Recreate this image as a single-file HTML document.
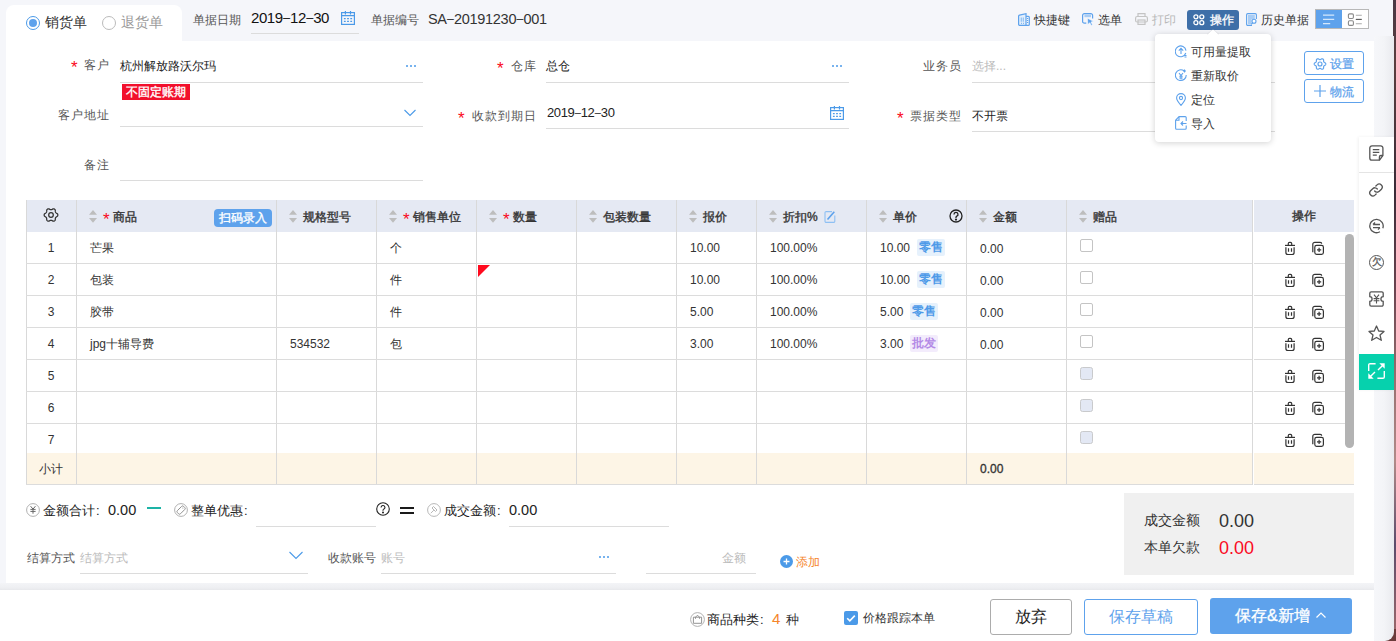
<!DOCTYPE html>
<html><head><meta charset="utf-8">
<style>
*{box-sizing:border-box;margin:0;padding:0}
html,body{width:1396px;height:641px;overflow:hidden}
body{position:relative;background:#f5f6fa;font-family:"Liberation Sans",sans-serif;font-size:12px;color:#333}
.a{position:absolute}
.t{position:absolute;white-space:nowrap;line-height:16px;height:16px}
.ul{position:absolute;height:1px;background:#dcdcdc}
.req{color:#fa0a23}
.lbl{color:#555;letter-spacing:1px}
.dots{position:absolute;width:10px;height:3px}
.dots i{position:absolute;top:0;width:2px;height:2px;background:#4b9ae8;border-radius:1px}
.nd{font-size:0.85em;margin:0 0.03em;position:relative;top:-0.05em}
.btnb{position:absolute;border:1px solid #5ea2ec;border-radius:3px;color:#5ea2ec;background:#fff}
</style></head><body>

<!-- desktop strip at right -->
<div class="a" style="left:1393px;top:0;width:3px;height:641px;background:linear-gradient(#4a3844,#5a3e3e 10%,#3a2c38 30%,#6a4450 45%,#9a7272 60%,#b08a88 72%,#5c4c6c 85%,#a06a6a)"></div>
<div class="a" style="left:1382px;top:629px;width:14px;height:12px;background:#6a3a3a"></div>
<div class="a" style="left:1374px;top:36px;width:20px;height:605px;background:linear-gradient(90deg,#f6f7fa,#f3f4f7 50%,#e9eaee);border-bottom-right-radius:9px"></div>


<!-- right toolbar -->
<svg class="a" style="left:1018px;top:13px" width="12" height="13" viewBox="0 0 12 13" fill="none" stroke="#5ea2ec" stroke-width="1.2"><path d="M.6 3.4A1.2 1.2 0 0 1 1.5 2.2L8 .7v11.7H1.8A1.2 1.2 0 0 1 .6 11.2z" fill="#e3effc"/><path d="M8 3.3h2.3a1 1 0 0 1 1 1v7.1a1 1 0 0 1-1 1H8"/><path d="M3.3 4.5v4.2M5.3 4.5v4.2" stroke="#8ec0f3"/><path d="M3 10.3h.9M5 10.3h.9M9 5.5h1.2M9 7.5h1.2M9 9.5h1.2" stroke-width="1"/></svg>
<div class="t" style="left:1034px;top:12px;color:#333">快捷键</div>
<svg class="a" style="left:1082px;top:13px" width="12" height="13" viewBox="0 0 12 13" fill="none" stroke="#5ea2ec" stroke-width="1.2"><path d="M4.3 10.2H2.4A1.8 1.8 0 0 1 .6 8.4V2.4A1.8 1.8 0 0 1 2.4.6h6.4a1.8 1.8 0 0 1 1.8 1.8v3.2"/><rect x="2.4" y="1.4" width="6.6" height="2.8" fill="#a9cdf5" stroke="none"/><path d="M5.4 5.2l6.2 3.1-2.6.8 1.5 2.6-1.2.7-1.5-2.6-2 1.8z" fill="#5ea2ec" stroke="#fff" stroke-width=".6"/></svg>
<div class="t" style="left:1098px;top:12px;color:#333">选单</div>
<svg class="a" style="left:1135px;top:13px" width="13" height="12" viewBox="0 0 13 12" fill="none" stroke="#c4c4c4" stroke-width="1.2"><path d="M3 3.5V.6h7v2.9"/><rect x=".6" y="3.5" width="11.8" height="5.5" rx="1.5"/><rect x="3" y="7" width="7" height="4.4"/></svg>
<div class="t" style="left:1152px;top:12px;color:#b8b8b8">打印</div>
<div class="a" style="left:1187px;top:10px;width:52px;height:20px;background:#3e6fa8;border-radius:3px"></div>

<svg class="a" style="left:1193px;top:14px" width="12" height="12" viewBox="0 0 12 12" fill="none" stroke="#fff" stroke-width="1.3"><circle cx="2.9" cy="2.8" r="2"/><circle cx="8.8" cy="2.8" r="2"/><circle cx="2.9" cy="8.7" r="2"/><circle cx="8.8" cy="8.7" r="2"/></svg>
<div class="t" style="left:1210px;top:12px;color:#fff;-webkit-text-stroke:0.3px #fff">操作</div>
<svg class="a" style="left:1246px;top:13px" width="11" height="13" viewBox="0 0 11 13" fill="none" stroke="#5ea2ec" stroke-width="1.1"><path d="M6 12.4H1.8A1.2 1.2 0 0 1 .6 11.2V1.8A1.2 1.2 0 0 1 1.8.6h7.4a1.2 1.2 0 0 1 1.2 1.2V6"/><path d="M2 2h6.8v4.2H5.5v5H2z" fill="#a9cdf5" stroke="none"/><circle cx="8" cy="8.3" r="2" fill="#fff"/><path d="M6.6 9.8l-1.4 1.6"/></svg>
<div class="t" style="left:1261px;top:12px;color:#333">历史单据</div>
<div class="a" style="left:1315px;top:9px;width:54px;height:20px;border:1px solid #b8b8b8;background:#fff"></div>
<div class="a" style="left:1316px;top:10px;width:26px;height:18px;background:#5ea2ec"></div>
<svg class="a" style="left:1322px;top:13px" width="14" height="12" viewBox="0 0 14 12" stroke="#d4e7fb" stroke-width="1.2"><path d="M1 2.2h11.2M1 6.4h11.2M1 10.7h7.2"/></svg>
<svg class="a" style="left:1347px;top:13px" width="16" height="13" viewBox="0 0 16 13" fill="none" stroke="#8a8a8a" stroke-width="1.1"><rect x="1.4" y=".9" width="5" height="4.6" rx="1.2"/><rect x="1.4" y="7.8" width="5" height="4.6" rx="1.2"/><path d="M8.8 2.2h6M8.8 10.7h6" stroke="#aaa"/><path d="M8.8 6.4h6" stroke="#555"/></svg>

<!-- main white panel -->
<div class="a" style="left:6px;top:41px;width:1368px;height:542px;background:#fff"></div>

<!-- FORM -->
<div class="t req" style="left:71px;top:60px;font-size:17px;line-height:16px">*</div>
<div class="t lbl" style="left:84px;top:57px">客户</div>
<div class="t" style="left:120px;top:58px;color:#222">杭州解放路沃尔玛</div>
<div class="dots" style="left:406px;top:65px"><i style="left:0"></i><i style="left:4px"></i><i style="left:8px"></i></div>
<div class="ul" style="left:120px;top:82px;width:303px"></div>
<div class="a" style="left:122px;top:84px;width:68px;height:16px;background:#f2102c;color:#fff;font-size:12px;line-height:16px;text-align:center;-webkit-text-stroke:0.35px #fff">不固定账期</div>

<div class="t req" style="left:497px;top:61px;font-size:17px;line-height:16px">*</div>
<div class="t lbl" style="left:511px;top:58px">仓库</div>
<div class="t" style="left:546px;top:58px;color:#222">总仓</div>
<div class="dots" style="left:832px;top:65px"><i style="left:0"></i><i style="left:4px"></i><i style="left:8px"></i></div>
<div class="ul" style="left:546px;top:82px;width:303px"></div>

<div class="t lbl" style="left:923px;top:58px">业务员</div>
<div class="t" style="left:972px;top:58px;color:#bbb">选择...</div>
<div class="ul" style="left:972px;top:82px;width:303px"></div>

<div class="btnb" style="left:1304px;top:51px;width:60px;height:24px"></div>
<svg class="a" style="left:1312.6px;top:56.5px" width="14" height="14" viewBox="0 0 14 14" fill="none" stroke="#5ea2ec" stroke-width="1.15"><path d="M12.80 7.00 L12.75 7.38 L12.60 7.74 L12.35 8.06 L11.93 8.32 L11.49 8.52 L11.20 8.74 L10.98 8.96 L10.81 9.20 L10.69 9.47 L10.61 9.77 L10.57 10.13 L10.61 10.61 L10.60 11.10 L10.44 11.48 L10.20 11.79 L9.90 12.02 L9.55 12.17 L9.16 12.22 L8.75 12.17 L8.32 11.93 L7.93 11.65 L7.59 11.51 L7.29 11.43 L7.00 11.40 L6.71 11.43 L6.41 11.51 L6.07 11.65 L5.68 11.93 L5.25 12.17 L4.84 12.22 L4.45 12.17 L4.10 12.02 L3.80 11.79 L3.56 11.48 L3.40 11.10 L3.39 10.61 L3.43 10.13 L3.39 9.77 L3.31 9.47 L3.19 9.20 L3.02 8.96 L2.80 8.74 L2.51 8.52 L2.07 8.32 L1.65 8.06 L1.40 7.74 L1.25 7.38 L1.20 7.00 L1.25 6.62 L1.40 6.26 L1.65 5.94 L2.07 5.68 L2.51 5.48 L2.80 5.26 L3.02 5.04 L3.19 4.80 L3.31 4.53 L3.39 4.23 L3.43 3.87 L3.39 3.39 L3.40 2.90 L3.56 2.52 L3.80 2.21 L4.10 1.98 L4.45 1.83 L4.84 1.78 L5.25 1.83 L5.68 2.07 L6.07 2.35 L6.41 2.49 L6.71 2.57 L7.00 2.60 L7.29 2.57 L7.59 2.49 L7.93 2.35 L8.32 2.07 L8.75 1.83 L9.16 1.78 L9.55 1.83 L9.90 1.98 L10.20 2.21 L10.44 2.52 L10.60 2.90 L10.61 3.39 L10.57 3.87 L10.61 4.23 L10.69 4.53 L10.81 4.80 L10.98 5.04 L11.20 5.26 L11.49 5.48 L11.93 5.68 L12.35 5.94 L12.60 6.26 L12.75 6.62Z"/><circle cx="7" cy="7" r="2"/></svg>
<div class="t" style="left:1330px;top:56px;color:#5ea2ec;font-size:12px;line-height:17px;height:17px;-webkit-text-stroke:0.25px #5ea2ec">设置</div>
<div class="btnb" style="left:1304px;top:79px;width:60px;height:24px"></div>
<svg class="a" style="left:1314px;top:85px" width="12" height="12" viewBox="0 0 12 12" stroke="#5ea2ec" stroke-width="1.2"><path d="M6 0v12M0 6h12"/></svg>
<div class="t" style="left:1330px;top:84px;color:#5ea2ec;font-size:12px;line-height:17px;height:17px;-webkit-text-stroke:0.25px #5ea2ec">物流</div>

<div class="t lbl" style="left:58px;top:107px">客户地址</div>
<svg class="a" style="left:404px;top:109px" width="12" height="8" viewBox="0 0 12 8" fill="none" stroke="#4b9ae8" stroke-width="1.1"><path d="M.5 1l5.5 5.5L11.5 1"/></svg>
<div class="ul" style="left:120px;top:126px;width:303px"></div>

<div class="t req" style="left:458px;top:111px;font-size:17px;line-height:16px">*</div>
<div class="t lbl" style="left:472px;top:108px">收款到期日</div>
<div class="t" style="left:547px;top:105px;font-size:13px;letter-spacing:-0.4px;color:#222">2019<span class="nd">–</span>12<span class="nd">–</span>30</div>
<svg class="a" style="left:830px;top:106px" width="14" height="14" viewBox="0 0 14 14" fill="none" stroke="#4b9ae8" stroke-width="1.2"><rect x="0.6" y="1.6" width="12.8" height="11.8"/><path d="M4.4 0v3.4M9.5 0v3.4M0.6 4.6h12.8"/><path d="M2.9 7.6h1.8M6.1 7.6h1.8M9.3 7.6h1.8M2.9 10.4h1.8M6.1 10.4h1.8M9.3 10.4h1.8" stroke-width="1.1"/></svg>
<div class="ul" style="left:546px;top:128px;width:303px"></div>

<div class="t req" style="left:897px;top:111px;font-size:17px;line-height:16px">*</div>
<div class="t lbl" style="left:910px;top:108px">票据类型</div>
<div class="t" style="left:972px;top:108px;color:#222">不开票</div>
<div class="ul" style="left:972px;top:131px;width:303px"></div>

<div class="t lbl" style="left:84px;top:157px">备注</div>
<div class="ul" style="left:120px;top:180px;width:303px"></div>

<!-- TABLE -->
<div class="a" style="left:26px;top:200px;width:1226px;height:32px;background:#e5e9f3"></div>
<div class="a" style="left:1254px;top:200px;width:100px;height:32px;background:#e5e9f3"></div>
<div class="a" style="left:26px;top:453px;width:1226px;height:31px;background:#fdf5e6"></div>
<div class="a" style="left:1254px;top:453px;width:100px;height:31px;background:#fdf5e6"></div>
<div class="a" style="left:26px;top:200px;width:1px;height:285px;background:#d9d9d9"></div>
<div class="a" style="left:76px;top:200px;width:1px;height:285px;background:#d9d9d9"></div>
<div class="a" style="left:276px;top:200px;width:1px;height:285px;background:#d9d9d9"></div>
<div class="a" style="left:376px;top:200px;width:1px;height:285px;background:#d9d9d9"></div>
<div class="a" style="left:476px;top:200px;width:1px;height:285px;background:#d9d9d9"></div>
<div class="a" style="left:576px;top:200px;width:1px;height:285px;background:#d9d9d9"></div>
<div class="a" style="left:676px;top:200px;width:1px;height:285px;background:#d9d9d9"></div>
<div class="a" style="left:756px;top:200px;width:1px;height:285px;background:#d9d9d9"></div>
<div class="a" style="left:866px;top:200px;width:1px;height:285px;background:#d9d9d9"></div>
<div class="a" style="left:966px;top:200px;width:1px;height:285px;background:#d9d9d9"></div>
<div class="a" style="left:1066px;top:200px;width:1px;height:285px;background:#d9d9d9"></div>
<div class="a" style="left:1252px;top:200px;width:1px;height:285px;background:#d9d9d9"></div>
<div class="a" style="left:26px;top:263px;width:1226px;height:1px;background:#dcdcdc"></div>
<div class="a" style="left:1254px;top:263px;width:100px;height:1px;background:#dcdcdc"></div>
<div class="a" style="left:26px;top:295px;width:1226px;height:1px;background:#dcdcdc"></div>
<div class="a" style="left:1254px;top:295px;width:100px;height:1px;background:#dcdcdc"></div>
<div class="a" style="left:26px;top:327px;width:1226px;height:1px;background:#dcdcdc"></div>
<div class="a" style="left:1254px;top:327px;width:100px;height:1px;background:#dcdcdc"></div>
<div class="a" style="left:26px;top:359px;width:1226px;height:1px;background:#dcdcdc"></div>
<div class="a" style="left:1254px;top:359px;width:100px;height:1px;background:#dcdcdc"></div>
<div class="a" style="left:26px;top:391px;width:1226px;height:1px;background:#dcdcdc"></div>
<div class="a" style="left:1254px;top:391px;width:100px;height:1px;background:#dcdcdc"></div>
<div class="a" style="left:26px;top:423px;width:1226px;height:1px;background:#dcdcdc"></div>
<div class="a" style="left:1254px;top:423px;width:100px;height:1px;background:#dcdcdc"></div>
<div class="a" style="left:26px;top:484px;width:1226px;height:1px;background:#dcdcdc"></div>
<div class="a" style="left:1254px;top:484px;width:100px;height:1px;background:#dcdcdc"></div>
<svg class="a" style="left:43.4px;top:207.4px" width="16" height="16" viewBox="0 0 16 16" fill="none" stroke="#333" stroke-width="1.25"><path d="M14.85 8.00 L14.79 8.45 L14.63 8.87 L14.36 9.26 L13.89 9.58 L13.41 9.84 L13.09 10.11 L12.83 10.38 L12.63 10.67 L12.48 10.99 L12.37 11.36 L12.30 11.77 L12.31 12.31 L12.27 12.87 L12.07 13.31 L11.78 13.66 L11.43 13.93 L11.01 14.11 L10.56 14.18 L10.08 14.14 L9.58 13.89 L9.12 13.61 L8.72 13.46 L8.35 13.38 L8.00 13.35 L7.65 13.38 L7.28 13.46 L6.88 13.61 L6.42 13.89 L5.92 14.14 L5.44 14.18 L4.99 14.11 L4.58 13.93 L4.22 13.66 L3.93 13.31 L3.73 12.87 L3.69 12.31 L3.70 11.77 L3.63 11.36 L3.52 10.99 L3.37 10.67 L3.17 10.38 L2.91 10.11 L2.59 9.84 L2.11 9.58 L1.64 9.26 L1.37 8.87 L1.21 8.45 L1.15 8.00 L1.21 7.55 L1.37 7.13 L1.64 6.74 L2.11 6.42 L2.59 6.16 L2.91 5.89 L3.17 5.62 L3.37 5.33 L3.52 5.01 L3.63 4.64 L3.70 4.23 L3.69 3.69 L3.73 3.13 L3.93 2.69 L4.22 2.34 L4.57 2.07 L4.99 1.89 L5.44 1.82 L5.92 1.86 L6.42 2.11 L6.88 2.39 L7.28 2.54 L7.65 2.62 L8.00 2.65 L8.35 2.62 L8.72 2.54 L9.12 2.39 L9.58 2.11 L10.08 1.86 L10.56 1.82 L11.01 1.89 L11.43 2.07 L11.78 2.34 L12.07 2.69 L12.27 3.13 L12.31 3.69 L12.30 4.23 L12.37 4.64 L12.48 5.01 L12.63 5.32 L12.83 5.62 L13.09 5.89 L13.41 6.16 L13.89 6.42 L14.36 6.74 L14.63 7.13 L14.79 7.55Z"/><circle cx="8" cy="8" r="2.3"/></svg>
<svg class="a" style="left:89px;top:210px" width="8" height="13" viewBox="0 0 8 13" fill="#bdbdbd"><path d="M4 0L8 4.8H0z"/><path d="M0 8h8L4 12.8z"/></svg>
<div class="t req" style="left:103px;top:212px;font-size:17px;line-height:16px">*</div>
<div class="t" style="left:113px;top:209px;color:#333;-webkit-text-stroke:0.35px #333">商品</div>
<svg class="a" style="left:289px;top:210px" width="8" height="13" viewBox="0 0 8 13" fill="#bdbdbd"><path d="M4 0L8 4.8H0z"/><path d="M0 8h8L4 12.8z"/></svg>
<div class="t" style="left:303px;top:209px;color:#333;-webkit-text-stroke:0.35px #333">规格型号</div>
<svg class="a" style="left:389px;top:210px" width="8" height="13" viewBox="0 0 8 13" fill="#bdbdbd"><path d="M4 0L8 4.8H0z"/><path d="M0 8h8L4 12.8z"/></svg>
<div class="t req" style="left:403px;top:212px;font-size:17px;line-height:16px">*</div>
<div class="t" style="left:413px;top:209px;color:#333;-webkit-text-stroke:0.35px #333">销售单位</div>
<svg class="a" style="left:489px;top:210px" width="8" height="13" viewBox="0 0 8 13" fill="#bdbdbd"><path d="M4 0L8 4.8H0z"/><path d="M0 8h8L4 12.8z"/></svg>
<div class="t req" style="left:503px;top:212px;font-size:17px;line-height:16px">*</div>
<div class="t" style="left:513px;top:209px;color:#333;-webkit-text-stroke:0.35px #333">数量</div>
<svg class="a" style="left:589px;top:210px" width="8" height="13" viewBox="0 0 8 13" fill="#bdbdbd"><path d="M4 0L8 4.8H0z"/><path d="M0 8h8L4 12.8z"/></svg>
<div class="t" style="left:603px;top:209px;color:#333;-webkit-text-stroke:0.35px #333">包装数量</div>
<svg class="a" style="left:689px;top:210px" width="8" height="13" viewBox="0 0 8 13" fill="#bdbdbd"><path d="M4 0L8 4.8H0z"/><path d="M0 8h8L4 12.8z"/></svg>
<div class="t" style="left:703px;top:209px;color:#333;-webkit-text-stroke:0.35px #333">报价</div>
<svg class="a" style="left:769px;top:210px" width="8" height="13" viewBox="0 0 8 13" fill="#bdbdbd"><path d="M4 0L8 4.8H0z"/><path d="M0 8h8L4 12.8z"/></svg>
<div class="t" style="left:783px;top:209px;color:#333;-webkit-text-stroke:0.35px #333">折扣%</div>
<svg class="a" style="left:879px;top:210px" width="8" height="13" viewBox="0 0 8 13" fill="#bdbdbd"><path d="M4 0L8 4.8H0z"/><path d="M0 8h8L4 12.8z"/></svg>
<div class="t" style="left:893px;top:209px;color:#333;-webkit-text-stroke:0.35px #333">单价</div>
<svg class="a" style="left:979px;top:210px" width="8" height="13" viewBox="0 0 8 13" fill="#bdbdbd"><path d="M4 0L8 4.8H0z"/><path d="M0 8h8L4 12.8z"/></svg>
<div class="t" style="left:993px;top:209px;color:#333;-webkit-text-stroke:0.35px #333">金额</div>
<svg class="a" style="left:1079px;top:210px" width="8" height="13" viewBox="0 0 8 13" fill="#bdbdbd"><path d="M4 0L8 4.8H0z"/><path d="M0 8h8L4 12.8z"/></svg>
<div class="t" style="left:1093px;top:209px;color:#333;-webkit-text-stroke:0.35px #333">赠品</div>
<div class="a" style="left:214px;top:209px;width:58px;height:18px;background:#5ea2ec;border-radius:4px;color:#fff;-webkit-text-stroke:0.35px #fff;text-align:center;line-height:18px">扫码录入</div>
<svg class="a" style="left:824px;top:210px" width="12" height="13" viewBox="0 0 12 13" fill="none" stroke="#5ea2ec" stroke-width="1.1"><path d="M8 1.6H2.2A1.2 1.2 0 0 0 1 2.8v8.4a1.2 1.2 0 0 0 1.2 1.2h7.4a1.2 1.2 0 0 0 1.2-1.2V5.5" stroke="#8ec0f3"/><path d="M3.5 9.5l6.8-7.8" stroke-width="1.6"/></svg>
<svg class="a" style="left:949px;top:209px" width="14" height="14" viewBox="0 0 14 14" fill="none" stroke="#222" stroke-width="1.3"><circle cx="7" cy="7" r="6"/><path d="M5 5.4a2 2 0 1 1 2.8 1.8c-.6.3-.8.7-.8 1.3v.6"/><circle cx="7" cy="10.6" r=".5" fill="#222"/></svg>
<div class="t" style="left:1292px;top:208px;color:#333;-webkit-text-stroke:0.35px #333">操作</div>
<div class="a" style="left:26px;top:232px;width:50px;height:31px;line-height:33px;text-align:center;color:#333">1</div>
<div class="t" style="left:90px;top:239.5px;color:#333">芒果</div>
<div class="t" style="left:390px;top:239.5px;color:#333">个</div>
<div class="t" style="left:690px;top:239.5px;color:#333">10.00</div>
<div class="t" style="left:770px;top:239.5px;color:#333">100.00%</div>
<div class="t" style="left:880px;top:239.5px;color:#333">10.00<span style="display:inline-block;margin-left:6.5px;padding:0 2px;height:17px;line-height:17px;vertical-align:top;margin-top:-0.5px;background:#e6f1fc;color:#4e9ae8;font-weight:600;border-radius:2px">零售</span></div>
<div class="t" style="left:980px;top:240.5px;color:#333">0.00</div>
<div class="a" style="left:1080px;top:239px;width:13px;height:13px;border:1px solid #c4c4c4;border-radius:2px;background:#fff"></div>
<svg class="a" style="left:1284px;top:241px" width="12" height="15" viewBox="0 0 12 15" fill="none" stroke="#333" stroke-width="1.2"><path d="M1 4.4h10"/><path d="M4.3 4.2V2.6a1.3 1.3 0 0 1 1.3-1.3h.8a1.3 1.3 0 0 1 1.3 1.3v1.6"/><path d="M1.9 6.3v5.2a2 2 0 0 0 2 2h4.2a2 2 0 0 0 2-2V6.3"/><path d="M4.5 7.2v3.6M7.5 7.2v3.6"/></svg>
<svg class="a" style="left:1311px;top:241px" width="14" height="15" viewBox="0 0 14 15" fill="none" stroke="#333" stroke-width="1.2"><path d="M1.8 11.3V3.3a2 2 0 0 1 2-2h5.4a1.5 1.5 0 0 1 1.5 1.5"/><rect x="3.8" y="4.4" width="8.6" height="9" rx="1.8"/><path d="M6 8.8h4.2M8.1 6.7v4.2"/></svg>
<div class="a" style="left:26px;top:264px;width:50px;height:31px;line-height:33px;text-align:center;color:#333">2</div>
<div class="t" style="left:90px;top:271.5px;color:#333">包装</div>
<div class="t" style="left:390px;top:271.5px;color:#333">件</div>
<div class="t" style="left:690px;top:271.5px;color:#333">10.00</div>
<div class="t" style="left:770px;top:271.5px;color:#333">100.00%</div>
<div class="t" style="left:880px;top:271.5px;color:#333">10.00<span style="display:inline-block;margin-left:6.5px;padding:0 2px;height:17px;line-height:17px;vertical-align:top;margin-top:-0.5px;background:#e6f1fc;color:#4e9ae8;font-weight:600;border-radius:2px">零售</span></div>
<div class="t" style="left:980px;top:272.5px;color:#333">0.00</div>
<div class="a" style="left:1080px;top:271px;width:13px;height:13px;border:1px solid #c4c4c4;border-radius:2px;background:#fff"></div>
<svg class="a" style="left:1284px;top:273px" width="12" height="15" viewBox="0 0 12 15" fill="none" stroke="#333" stroke-width="1.2"><path d="M1 4.4h10"/><path d="M4.3 4.2V2.6a1.3 1.3 0 0 1 1.3-1.3h.8a1.3 1.3 0 0 1 1.3 1.3v1.6"/><path d="M1.9 6.3v5.2a2 2 0 0 0 2 2h4.2a2 2 0 0 0 2-2V6.3"/><path d="M4.5 7.2v3.6M7.5 7.2v3.6"/></svg>
<svg class="a" style="left:1311px;top:273px" width="14" height="15" viewBox="0 0 14 15" fill="none" stroke="#333" stroke-width="1.2"><path d="M1.8 11.3V3.3a2 2 0 0 1 2-2h5.4a1.5 1.5 0 0 1 1.5 1.5"/><rect x="3.8" y="4.4" width="8.6" height="9" rx="1.8"/><path d="M6 8.8h4.2M8.1 6.7v4.2"/></svg>
<div class="a" style="left:26px;top:296px;width:50px;height:31px;line-height:33px;text-align:center;color:#333">3</div>
<div class="t" style="left:90px;top:303.5px;color:#333">胶带</div>
<div class="t" style="left:390px;top:303.5px;color:#333">件</div>
<div class="t" style="left:690px;top:303.5px;color:#333">5.00</div>
<div class="t" style="left:770px;top:303.5px;color:#333">100.00%</div>
<div class="t" style="left:880px;top:303.5px;color:#333">5.00<span style="display:inline-block;margin-left:6.5px;padding:0 2px;height:17px;line-height:17px;vertical-align:top;margin-top:-0.5px;background:#e6f1fc;color:#4e9ae8;font-weight:600;border-radius:2px">零售</span></div>
<div class="t" style="left:980px;top:304.5px;color:#333">0.00</div>
<div class="a" style="left:1080px;top:303px;width:13px;height:13px;border:1px solid #c4c4c4;border-radius:2px;background:#fff"></div>
<svg class="a" style="left:1284px;top:305px" width="12" height="15" viewBox="0 0 12 15" fill="none" stroke="#333" stroke-width="1.2"><path d="M1 4.4h10"/><path d="M4.3 4.2V2.6a1.3 1.3 0 0 1 1.3-1.3h.8a1.3 1.3 0 0 1 1.3 1.3v1.6"/><path d="M1.9 6.3v5.2a2 2 0 0 0 2 2h4.2a2 2 0 0 0 2-2V6.3"/><path d="M4.5 7.2v3.6M7.5 7.2v3.6"/></svg>
<svg class="a" style="left:1311px;top:305px" width="14" height="15" viewBox="0 0 14 15" fill="none" stroke="#333" stroke-width="1.2"><path d="M1.8 11.3V3.3a2 2 0 0 1 2-2h5.4a1.5 1.5 0 0 1 1.5 1.5"/><rect x="3.8" y="4.4" width="8.6" height="9" rx="1.8"/><path d="M6 8.8h4.2M8.1 6.7v4.2"/></svg>
<div class="a" style="left:26px;top:328px;width:50px;height:31px;line-height:33px;text-align:center;color:#333">4</div>
<div class="t" style="left:90px;top:335.5px;color:#333">jpg十辅导费</div>
<div class="t" style="left:290px;top:335.5px;color:#333">534532</div>
<div class="t" style="left:390px;top:335.5px;color:#333">包</div>
<div class="t" style="left:690px;top:335.5px;color:#333">3.00</div>
<div class="t" style="left:770px;top:335.5px;color:#333">100.00%</div>
<div class="t" style="left:880px;top:335.5px;color:#333">3.00<span style="display:inline-block;margin-left:6.5px;padding:0 2px;height:17px;line-height:17px;vertical-align:top;margin-top:-0.5px;background:#f3ecfc;color:#b48ae6;font-weight:600;border-radius:2px">批发</span></div>
<div class="t" style="left:980px;top:336.5px;color:#333">0.00</div>
<div class="a" style="left:1080px;top:335px;width:13px;height:13px;border:1px solid #c4c4c4;border-radius:2px;background:#fff"></div>
<svg class="a" style="left:1284px;top:337px" width="12" height="15" viewBox="0 0 12 15" fill="none" stroke="#333" stroke-width="1.2"><path d="M1 4.4h10"/><path d="M4.3 4.2V2.6a1.3 1.3 0 0 1 1.3-1.3h.8a1.3 1.3 0 0 1 1.3 1.3v1.6"/><path d="M1.9 6.3v5.2a2 2 0 0 0 2 2h4.2a2 2 0 0 0 2-2V6.3"/><path d="M4.5 7.2v3.6M7.5 7.2v3.6"/></svg>
<svg class="a" style="left:1311px;top:337px" width="14" height="15" viewBox="0 0 14 15" fill="none" stroke="#333" stroke-width="1.2"><path d="M1.8 11.3V3.3a2 2 0 0 1 2-2h5.4a1.5 1.5 0 0 1 1.5 1.5"/><rect x="3.8" y="4.4" width="8.6" height="9" rx="1.8"/><path d="M6 8.8h4.2M8.1 6.7v4.2"/></svg>
<div class="a" style="left:26px;top:360px;width:50px;height:31px;line-height:33px;text-align:center;color:#333">5</div>
<div class="a" style="left:1080px;top:367px;width:13px;height:13px;border:1px solid #c9cacc;border-radius:2.5px;background:#e3e8f4"></div>
<svg class="a" style="left:1284px;top:369px" width="12" height="15" viewBox="0 0 12 15" fill="none" stroke="#333" stroke-width="1.2"><path d="M1 4.4h10"/><path d="M4.3 4.2V2.6a1.3 1.3 0 0 1 1.3-1.3h.8a1.3 1.3 0 0 1 1.3 1.3v1.6"/><path d="M1.9 6.3v5.2a2 2 0 0 0 2 2h4.2a2 2 0 0 0 2-2V6.3"/><path d="M4.5 7.2v3.6M7.5 7.2v3.6"/></svg>
<svg class="a" style="left:1311px;top:369px" width="14" height="15" viewBox="0 0 14 15" fill="none" stroke="#333" stroke-width="1.2"><path d="M1.8 11.3V3.3a2 2 0 0 1 2-2h5.4a1.5 1.5 0 0 1 1.5 1.5"/><rect x="3.8" y="4.4" width="8.6" height="9" rx="1.8"/><path d="M6 8.8h4.2M8.1 6.7v4.2"/></svg>
<div class="a" style="left:26px;top:392px;width:50px;height:31px;line-height:33px;text-align:center;color:#333">6</div>
<div class="a" style="left:1080px;top:399px;width:13px;height:13px;border:1px solid #c9cacc;border-radius:2.5px;background:#e3e8f4"></div>
<svg class="a" style="left:1284px;top:401px" width="12" height="15" viewBox="0 0 12 15" fill="none" stroke="#333" stroke-width="1.2"><path d="M1 4.4h10"/><path d="M4.3 4.2V2.6a1.3 1.3 0 0 1 1.3-1.3h.8a1.3 1.3 0 0 1 1.3 1.3v1.6"/><path d="M1.9 6.3v5.2a2 2 0 0 0 2 2h4.2a2 2 0 0 0 2-2V6.3"/><path d="M4.5 7.2v3.6M7.5 7.2v3.6"/></svg>
<svg class="a" style="left:1311px;top:401px" width="14" height="15" viewBox="0 0 14 15" fill="none" stroke="#333" stroke-width="1.2"><path d="M1.8 11.3V3.3a2 2 0 0 1 2-2h5.4a1.5 1.5 0 0 1 1.5 1.5"/><rect x="3.8" y="4.4" width="8.6" height="9" rx="1.8"/><path d="M6 8.8h4.2M8.1 6.7v4.2"/></svg>
<div class="a" style="left:26px;top:424px;width:50px;height:31px;line-height:33px;text-align:center;color:#333">7</div>
<div class="a" style="left:1080px;top:431px;width:13px;height:13px;border:1px solid #c9cacc;border-radius:2.5px;background:#e3e8f4"></div>
<svg class="a" style="left:1284px;top:433px" width="12" height="15" viewBox="0 0 12 15" fill="none" stroke="#333" stroke-width="1.2"><path d="M1 4.4h10"/><path d="M4.3 4.2V2.6a1.3 1.3 0 0 1 1.3-1.3h.8a1.3 1.3 0 0 1 1.3 1.3v1.6"/><path d="M1.9 6.3v5.2a2 2 0 0 0 2 2h4.2a2 2 0 0 0 2-2V6.3"/><path d="M4.5 7.2v3.6M7.5 7.2v3.6"/></svg>
<svg class="a" style="left:1311px;top:433px" width="14" height="15" viewBox="0 0 14 15" fill="none" stroke="#333" stroke-width="1.2"><path d="M1.8 11.3V3.3a2 2 0 0 1 2-2h5.4a1.5 1.5 0 0 1 1.5 1.5"/><rect x="3.8" y="4.4" width="8.6" height="9" rx="1.8"/><path d="M6 8.8h4.2M8.1 6.7v4.2"/></svg>
<svg class="a" style="left:478px;top:265px" width="12" height="12" viewBox="0 0 12 12"><path d="M0 0H12L0 12z" fill="#ff0a1e"/></svg>
<div class="a" style="left:26px;top:453px;width:50px;height:31px;line-height:33px;text-align:center;color:#333">小计</div>
<div class="t" style="left:980px;top:461px;color:#333;-webkit-text-stroke:0.3px #333">0.00</div>
<div class="a" style="left:1345px;top:234px;width:9px;height:214px;background:#b3b3b3;border-radius:4.5px"></div>

<!-- BOTTOM SUMMARY -->
<svg class="a" style="left:26px;top:503px" width="14" height="14" viewBox="0 0 14 14" fill="none" stroke="#a8a8a8" stroke-width="0.9"><circle cx="7" cy="7" r="6.4"/><path d="M4.6 3.2L7 6.1l2.4-2.9M7 6.1v4.6M4.4 6.4h5.2M4.4 8.4h5.2" stroke="#666" stroke-width="1"/></svg>
<div class="t" style="left:43px;top:502px;font-size:13px;line-height:17px;height:17px;color:#222">金额合计</div>
<div class="t" style="left:108px;top:501px;font-size:14.5px;line-height:18px;height:18px;color:#222">0.00</div>
<div class="a" style="left:147px;top:507px;width:14px;height:2px;background:#1db3a6"></div>
<svg class="a" style="left:174px;top:503px" width="14" height="14" viewBox="0 0 14 14" fill="none" stroke="#a8a8a8" stroke-width="0.9"><circle cx="7" cy="7" r="6.4"/><rect x="2.6" y="4.9" width="8.8" height="4.4" rx="1.4" transform="rotate(-45 7 7)" stroke="#888"/><circle cx="8.9" cy="5.1" r=".5" fill="#888" stroke="none"/></svg>
<div class="t" style="left:191px;top:502px;font-size:13px;line-height:17px;height:17px;color:#222">整单优惠</div>
<div class="ul" style="left:256px;top:526px;width:120px"></div>
<svg class="a" style="left:376px;top:502px" width="14" height="14" viewBox="0 0 14 14" fill="none" stroke="#222" stroke-width="1.1"><circle cx="7" cy="7" r="6.3"/><path d="M5.1 5.4a1.9 1.9 0 1 1 2.7 1.7c-.5.3-.8.6-.8 1.2v.5"/><circle cx="7" cy="10.4" r=".45" fill="#222"/></svg>
<div class="a" style="left:400px;top:507px;width:14px;height:2px;background:#1a1a1a"></div>
<div class="a" style="left:400px;top:512px;width:14px;height:2px;background:#1a1a1a"></div>
<svg class="a" style="left:427px;top:503px" width="14" height="14" viewBox="0 0 14 14" fill="none" stroke="#b0b0b0" stroke-width="0.9"><circle cx="7" cy="7" r="6.4"/><path d="M6.5 3.5l3.5 3.5-1.5 1.5L5 5zM6.8 7.2l-3 3"/></svg>
<div class="t" style="left:444px;top:502px;font-size:13px;line-height:17px;height:17px;color:#222">成交金额</div>
<div class="t" style="left:509px;top:501px;font-size:14.5px;line-height:18px;height:18px;color:#222">0.00</div>
<div class="ul" style="left:509px;top:526px;width:160px"></div>

<div class="t" style="left:27px;top:550px;color:#555">结算方式</div>
<div class="t" style="left:80px;top:550px;color:#bbb">结算方式</div>
<svg class="a" style="left:289px;top:551px" width="14" height="9" viewBox="0 0 14 9" fill="none" stroke="#4b9ae8" stroke-width="1.1"><path d="M.5 1l6.5 6.5L13.5 1"/></svg>
<div class="ul" style="left:80px;top:573px;width:228px"></div>
<div class="t" style="left:328px;top:550px;color:#555">收款账号</div>
<div class="t" style="left:381px;top:550px;color:#bbb">账号</div>
<div class="dots" style="left:599px;top:556px"><i style="left:0"></i><i style="left:4px"></i><i style="left:8px"></i></div>
<div class="ul" style="left:381px;top:573px;width:235px"></div>
<div class="t" style="left:722px;top:550px;color:#bbb">金额</div>
<div class="ul" style="left:646px;top:573px;width:110px"></div>
<svg class="a" style="left:780px;top:555px" width="13" height="13" viewBox="0 0 13 13"><circle cx="6.5" cy="6.5" r="6.5" fill="#4b9ae8"/><path d="M3.5 6.5h6M6.5 3.5v6" stroke="#fff" stroke-width="1.3"/></svg>
<div class="t" style="left:796px;top:554px;color:#f5862c">添加</div>

<div class="a" style="left:1124px;top:493px;width:230px;height:82px;background:#f0f0f0"></div>
<div class="t" style="left:1144px;top:511px;font-size:14px;line-height:18px;height:18px;color:#333">成交金额</div>
<div class="t" style="left:1219px;top:510px;font-size:18px;line-height:22px;height:22px;color:#333">0.00</div>
<div class="t" style="left:1144px;top:538px;font-size:14px;line-height:18px;height:18px;color:#333">本单欠款</div>
<div class="t" style="left:1219px;top:537px;font-size:18px;line-height:22px;height:22px;color:#fa0a23">0.00</div>


<div class="t" style="left:96px;top:502px;font-size:13px;line-height:17px;height:17px;color:#222">:</div>
<div class="t" style="left:244px;top:502px;font-size:13px;line-height:17px;height:17px;color:#222">:</div>
<div class="t" style="left:497px;top:502px;font-size:13px;line-height:17px;height:17px;color:#222">:</div>
<!-- footer -->
<div class="a" style="left:0;top:583px;width:1374px;height:8px;background:linear-gradient(#f3f4f7,#eeeff2 60%,#e4e5e9)"></div>
<div class="a" style="left:0;top:590px;width:1374px;height:51px;background:#fff"></div>

<!-- top tab -->
<div class="a" style="left:6px;top:5px;width:176px;height:40px;background:#fff;border-radius:8px 8px 0 0"></div>
<div class="a" style="left:26px;top:16px;width:14px;height:14px;border:1px solid #4b9ae8;border-radius:50%"></div>
<div class="a" style="left:29px;top:19px;width:8px;height:8px;background:#5ea2ec;border-radius:50%"></div>
<div class="t" style="left:45px;top:14px;font-size:13.5px;line-height:18px;height:18px;color:#333">销货单</div>
<div class="a" style="left:102px;top:16px;width:14px;height:14px;border:1px solid #bbb;border-radius:50%"></div>
<div class="t" style="left:121px;top:14px;font-size:13.5px;line-height:18px;height:18px;color:#999">退货单</div>

<div class="t lbl" style="left:193px;top:12px;letter-spacing:0">单据日期</div>
<div class="t" style="left:251px;top:9px;font-size:15px;letter-spacing:-0.45px;line-height:18px;height:18px;color:#111">2019<span class="nd">–</span>12<span class="nd">–</span>30</div>
<svg class="a" style="left:341px;top:11px" width="14" height="14" viewBox="0 0 14 14" fill="none" stroke="#4b9ae8" stroke-width="1.2"><rect x="0.6" y="1.6" width="12.8" height="11.8"/><path d="M4.4 0v3.4M9.5 0v3.4M0.6 4.6h12.8"/><path d="M2.9 7.6h1.8M6.1 7.6h1.8M9.3 7.6h1.8M2.9 10.4h1.8M6.1 10.4h1.8M9.3 10.4h1.8" stroke-width="1.1"/></svg>
<div class="ul" style="left:251px;top:33px;width:108px"></div>
<div class="t lbl" style="left:371px;top:12px;letter-spacing:0">单据编号</div>
<div class="t" style="left:428px;top:10px;font-size:14.5px;letter-spacing:-0.3px;line-height:18px;height:18px;color:#333">SA<span class="nd">–</span>20191230<span class="nd">–</span>001</div>


<!-- FOOTER CONTENT -->
<div class="t" style="left:760px;top:611px;font-size:13px;line-height:17px;height:17px;color:#222">:</div>

<svg class="a" style="left:690px;top:612px" width="15" height="15" viewBox="0 0 15 15" fill="none" stroke="#a8a8a8" stroke-width="0.9"><circle cx="7.5" cy="7.5" r="6.9"/><path d="M3.4 5.2h8.2v6.1H3.4zM5.5 6.8V5.2l2-2 2 2v1.6" stroke="#888"/></svg>
<div class="t" style="left:707px;top:611px;font-size:13px;line-height:17px;height:17px;color:#222">商品种类</div>
<div class="t" style="left:772px;top:610px;font-size:15px;line-height:18px;height:18px;color:#f5862c">4</div>
<div class="t" style="left:786px;top:611px;font-size:13px;line-height:17px;height:17px;color:#333">种</div>
<svg class="a" style="left:844px;top:611px" width="14" height="14" viewBox="0 0 14 14"><rect width="14" height="14" rx="2" fill="#4b9ae8"/><path d="M3.2 7.2l2.6 2.6 5-5.2" fill="none" stroke="#fff" stroke-width="1.6"/></svg>
<div class="t" style="left:863px;top:610px;color:#333">价格跟踪本单</div>
<div class="a" style="left:990px;top:599px;width:82px;height:36px;border:1px solid #acacac;border-radius:3px;background:#fff;color:#222;font-size:16px;line-height:34px;text-align:center">放弃</div>
<div class="a" style="left:1084px;top:599px;width:114px;height:36px;border:1px solid #5ea2ec;border-radius:3px;background:#fff;color:#5ea2ec;font-size:16px;line-height:34px;text-align:center">保存草稿</div>
<div class="a" style="left:1210px;top:598px;width:142px;height:36px;background:#5ea2ec;border-radius:3px;color:#fff;font-size:16px;line-height:36px;padding-left:25px;-webkit-text-stroke:0.3px #fff">保存&amp;新增</div>
<svg class="a" style="left:1316px;top:612px" width="10" height="6" viewBox="0 0 10 6" fill="none" stroke="#fff" stroke-width="1.2"><path d="M.5 5.5L5 1l4.5 4.5"/></svg>

<!-- DROPDOWN -->
<div class="a" style="left:1155px;top:34px;width:116px;height:108px;background:#fff;border-radius:4px;box-shadow:0 1px 6px rgba(0,0,0,.18)"></div>
<svg class="a" style="left:1207px;top:29px" width="12" height="6" viewBox="0 0 12 6"><path d="M0 6L6 .5 12 6z" fill="#fff"/><path d="M0 5.5L6 0l6 5.5" fill="none" stroke="rgba(0,0,0,.06)"/></svg>
<svg class="a" style="left:1175px;top:45px" width="12" height="13" viewBox="0 0 12 13" fill="none" stroke="#5ea2ec" stroke-width="1.1"><path d="M10.8 8A5.4 5.4 0 1 1 11 5.6"/><path d="M6 9V3.5M3.8 5.6L6 3.4l2.2 2.2"/><path d="M9.5 10.5h2M9.5 12h2"/></svg>
<div class="t" style="left:1191px;top:44px;color:#333">可用量提取</div>
<svg class="a" style="left:1175px;top:69px" width="12" height="13" viewBox="0 0 12 13" fill="none" stroke="#5ea2ec" stroke-width="1.1"><path d="M9 1.8A5.4 5.4 0 1 0 11.2 6"/><path d="M4 4l2 2.5L8 4M6 6.5v4M4.3 7.3h3.4M4.3 9h3.4"/><path d="M9.5 .5v3M8 2h3"/></svg>
<div class="t" style="left:1191px;top:68px;color:#333">重新取价</div>
<svg class="a" style="left:1176px;top:93px" width="10" height="13" viewBox="0 0 10 13" fill="none" stroke="#5ea2ec" stroke-width="1.1"><path d="M5 12.4C2.5 9.5.6 7.3.6 5a4.4 4.4 0 0 1 8.8 0c0 2.3-1.9 4.5-4.4 7.4z"/><circle cx="5" cy="5" r="1.6"/></svg>
<div class="t" style="left:1191px;top:92px;color:#333">定位</div>
<svg class="a" style="left:1175px;top:116px" width="12" height="14" viewBox="0 0 12 14" fill="none" stroke="#5ea2ec" stroke-width="1.1"><path d="M4 .6h6.2a1 1 0 0 1 1 1V5M11.2 9.5v2.8a1 1 0 0 1-1 1H1.6a1 1 0 0 1-1-1V4.2L4 .6v3.6H.6"/><path d="M11.5 7.5H6M8 5.5l-2 2 2 2"/></svg>
<div class="t" style="left:1191px;top:116px;color:#333">导入</div>

<!-- SIDE PANEL -->
<div class="a" style="left:1359px;top:137px;width:35px;height:253px;background:#fff;box-shadow:-1px 0 3px rgba(0,0,0,.06)"></div>
<div class="a" style="left:1359px;top:172px;width:35px;height:1px;background:#e4e4e4"></div>
<div class="a" style="left:1359px;top:354px;width:35px;height:36px;background:#06d1ad"></div>
<svg class="a" style="left:1369px;top:145px" width="15" height="16" viewBox="0 0 15 16" fill="none" stroke="#555" stroke-width="1.3"><path d="M13.9 10.5V3a2.2 2.2 0 0 0-2.2-2.2H3A2.2 2.2 0 0 0 .8 3v10A2.2 2.2 0 0 0 3 15.2h7.5z"/><path d="M13.9 10.5h-2a1.5 1.5 0 0 0-1.5 1.5v3.2"/><path d="M3.8 4.6h6.5M3.8 7.4h6.5M3.8 10.2h4"/></svg>
<svg class="a" style="left:1368px;top:182px" width="16" height="16" viewBox="0 0 24 24" fill="none" stroke="#555" stroke-width="2" stroke-linecap="round"><path d="M10 13.5a4.6 4.6 0 0 0 6.9.5l3.2-3.2a4.6 4.6 0 0 0-6.5-6.5l-1.8 1.8"/><path d="M14 10.5a4.6 4.6 0 0 0-6.9-.5l-3.2 3.2a4.6 4.6 0 0 0 6.5 6.5l1.8-1.8"/></svg>
<svg class="a" style="left:1369px;top:218px" width="15" height="16" viewBox="0 0 15 16" fill="none" stroke="#555" stroke-width="1.3"><path d="M10.9 13.8A6.7 6.7 0 1 1 13.8 10.3"/><path d="M4 6.5h7M4 6.5l2-2M11 9.6H4M11 9.6l-2 2"/></svg>
<div class="a" style="left:1369px;top:255px;width:15px;height:15px;border:1.2px solid #555;border-radius:50%;color:#555;font-size:9.5px;line-height:12.6px;text-align:center;-webkit-text-stroke:0.3px #555">欠</div>
<svg class="a" style="left:1369px;top:291px" width="15" height="16" viewBox="0 0 15 16" fill="none" stroke="#555" stroke-width="1.3"><path d="M2.2.8h10.6a1.4 1.4 0 0 1 1.4 1.4v3.5a2.3 2.3 0 0 0 0 4.6v3.5a1.4 1.4 0 0 1-1.4 1.4H2.2a1.4 1.4 0 0 1-1.4-1.4v-3.5a2.3 2.3 0 0 0 0-4.6V2.2A1.4 1.4 0 0 1 2.2.8z"/><path d="M5 3.6l2.5 3.2L10 3.6M7.5 6.8v5.8M4.6 7.6h5.8M4.6 9.8h5.8" stroke-width="1.1"/></svg>
<svg class="a" style="left:1368px;top:325px" width="17" height="17" viewBox="0 0 17 17" fill="none" stroke="#555" stroke-width="1.3" stroke-linejoin="round"><path d="M8.5 1l2.2 5 5.3.4-4 3.6 1.3 5.3-4.8-2.8-4.8 2.8 1.3-5.3-4-3.6 5.3-.4z"/></svg>
<svg class="a" style="left:1368px;top:363px" width="17" height="16" viewBox="0 0 17 16" fill="none" stroke="#fff" stroke-width="1.4"><path d="M.7 8V2.1A1.4 1.4 0 0 1 2.1.7H7.6M16.3 8v5.9a1.4 1.4 0 0 1-1.4 1.4H9.4M15.6 1.4L10 7M1.4 14.6L7 9"/><path d="M16.7.3v5.4L11.3.3zM.3 15.7v-5.4l5.4 5.4z" fill="#fff" stroke="none"/></svg>


</body></html>
